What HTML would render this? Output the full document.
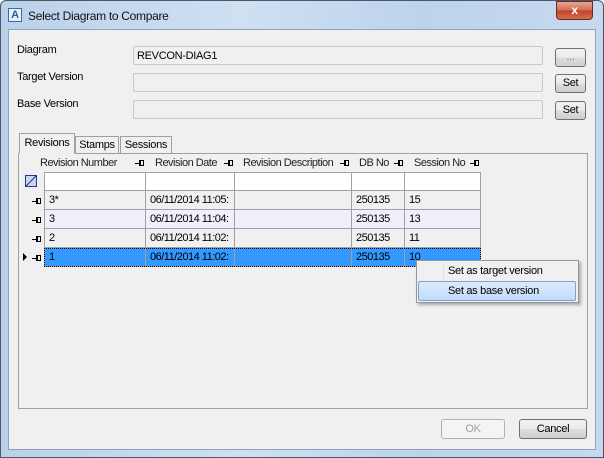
<!DOCTYPE html>
<html><head><style>
*{box-sizing:border-box;margin:0;padding:0}
body{width:604px;height:458px;overflow:hidden;background:#fff;font-family:"Liberation Sans",sans-serif;font-size:11px;color:#000;position:relative;letter-spacing:-0.3px}
.a{position:absolute}
.frame{left:0;top:0;width:604px;height:458px;border:1px solid #4a5868;border-radius:6px 6px 0 0;background:linear-gradient(90deg,#b9d1ea,#cfe0f2 40%,#bcd3ec 70%,#c6d9ee)}
.client{left:8px;top:29px;width:588px;height:421px;background:#f0f0f0;border:1px solid #8ea4bd}
.tb{background:#f0f0f0;border:1px solid #c8c8c8;border-radius:2px}
.btn{border:1px solid #707070;border-radius:3px;background:linear-gradient(#f2f2f2,#ebebeb 50%,#dddddd 51%,#cfcfcf);text-align:center;line-height:17px;font-size:11px}
.tab{border:1px solid #a0a0a0;border-bottom:none;background:#f0f0f0;font-size:11px;text-align:center;line-height:16px}
.cell{position:absolute;border-right:1px solid #a0a0a0;border-bottom:1px solid #a0a0a0;padding-left:4px;line-height:18px;white-space:nowrap;overflow:hidden;letter-spacing:-0.5px}
.hd{position:absolute;line-height:18px;color:#222;white-space:nowrap;letter-spacing:-0.5px}
.pin{position:absolute;width:9px;height:6px}
.pin:before{content:"";position:absolute;left:0;top:3px;width:4px;height:1px;background:#000}
.pin:after{content:"";position:absolute;left:4px;top:0;width:5px;height:6px;border:1px solid #000;border-left-width:2px;box-sizing:border-box}
</style></head><body>
<div class="a frame"></div>
<div class="a" style="left:8px;top:8px;width:14px;height:14px;border:1px solid #3b6aa8;background:#e8f0fa;color:#2a5a9a;font-size:11px;line-height:12px;text-align:center;font-weight:bold">A</div>
<div class="a" style="left:28px;top:9px;font-size:12px;color:#111">Select Diagram to Compare</div>
<div class="a" style="left:556px;top:1px;width:37px;height:19px;border:1px solid #6b2a20;border-radius:0 0 4px 4px;background:linear-gradient(#e8a493,#d36a52 50%,#c1412a 51%,#d56d52);color:#fff;font-weight:bold;font-size:12px;text-align:center;line-height:17px">x</div>
<div class="a client"></div>

<div class="a" style="left:17px;top:44px">Diagram</div>
<div class="a" style="left:17px;top:71px">Target Version</div>
<div class="a" style="left:17px;top:98px">Base Version</div>
<div class="a tb" style="left:133px;top:46px;width:410px;height:19px;padding:3px 0 0 3px">REVCON-DIAG1</div>
<div class="a tb" style="left:133px;top:73px;width:410px;height:19px"></div>
<div class="a tb" style="left:133px;top:100px;width:410px;height:19px"></div>
<div class="a btn" style="left:555px;top:48px;width:31px;height:19px;color:#777">...</div>
<div class="a btn" style="left:555px;top:74px;width:31px;height:19px">Set</div>
<div class="a btn" style="left:555px;top:101px;width:31px;height:19px">Set</div>

<div class="a" style="left:18px;top:153px;width:570px;height:256px;border:1px solid #a0a0a0;background:#f0f0f0"></div>
<div class="a tab" style="left:75px;top:136px;width:44px;height:17px">Stamps</div>
<div class="a tab" style="left:120px;top:136px;width:52px;height:17px">Sessions</div>
<div class="a tab" style="left:19px;top:133px;width:56px;height:21px;background:#f0f0f0;line-height:18px;border-bottom:1px solid #f0f0f0">Revisions</div>

<div class="hd" style="left:40px;top:154px">Revision Number</div><div class="pin" style="left:135px;top:160px"></div>
<div class="hd" style="left:155px;top:154px">Revision Date</div><div class="pin" style="left:224px;top:160px"></div>
<div class="hd" style="left:243px;top:154px">Revision Description</div><div class="pin" style="left:340px;top:160px"></div>
<div class="hd" style="left:359px;top:154px">DB No</div><div class="pin" style="left:394px;top:160px"></div>
<div class="hd" style="left:414px;top:154px">Session No</div><div class="pin" style="left:470px;top:160px"></div>
<div class="a" style="left:25px;top:175px;width:12px;height:12px;border:1px solid #223a8a;background:linear-gradient(135deg,#c8d4f0 45%,#223a8a 47%,#223a8a 53%,#c8d4f0 55%)"></div>

<div class="a" style="left:44px;top:172px;width:437px;height:95px;border-left:1px solid #a0a0a0;border-top:1px solid #a0a0a0"></div>
<div id="g"></div>
<script>
var cols=[44,146,235,352,405,481];
var rows=[["","","","",""],["3*","06/11/2014 11:05:","","250135","15"],["3","06/11/2014 11:04:","","250135","13"],["2","06/11/2014 11:02:","","250135","11"],["1","06/11/2014 11:02:","","250135","10"]];
var bg=["#fff","#f0f0f0","#f0f0fc","#f0f0f0","#3399ff"];
var h="";
for(var r=0;r<5;r++){var y=172+r*19;
for(var c=0;c<5;c++){h+='<div class="cell" style="left:'+(cols[c]+(c?0:1))+'px;top:'+(y+(r?0:1))+'px;width:'+(cols[c+1]-cols[c]-(c?0:1))+'px;height:'+(r?19:18)+'px;background:'+bg[r]+'">'+rows[r][c]+'</div>';}
if(r)h+='<div class="pin" style="left:32px;top:'+(y+7)+'px"></div>';}
document.getElementById('g').innerHTML=h;
</script>
<div class="a" style="left:44px;top:248px;width:437px;height:19px;border:1px dotted #000"></div>
<div class="a" style="left:23px;top:253px;width:0;height:0;border-top:4px solid transparent;border-bottom:4px solid transparent;border-left:4px solid #000"></div>

<div class="a" style="left:416px;top:260px;width:163px;height:43px;background:#f0f0f0;border:1px solid #979797;box-shadow:2px 2px 3px rgba(0,0,0,.3)"></div>
<div class="a" style="left:443px;top:262px;width:1px;height:39px;background:#e2e3e3"></div>
<div class="a" style="left:418px;top:281px;width:158px;height:20px;background:linear-gradient(#dcebfc,#c1dbfc);border:1px solid #7da2ce;border-radius:2px"></div>
<div class="a" style="left:448px;top:265px">Set as target version</div>
<div class="a" style="left:448px;top:285px">Set as base version</div>

<div class="a" style="left:441px;top:419px;width:64px;height:20px;border:1px solid #adb2b5;border-radius:3px;background:#f4f4f4;color:#a0a0a0;text-align:center;line-height:18px">OK</div>
<div class="a btn" style="left:519px;top:419px;width:68px;height:20px;line-height:18px">Cancel</div>
</body></html>
